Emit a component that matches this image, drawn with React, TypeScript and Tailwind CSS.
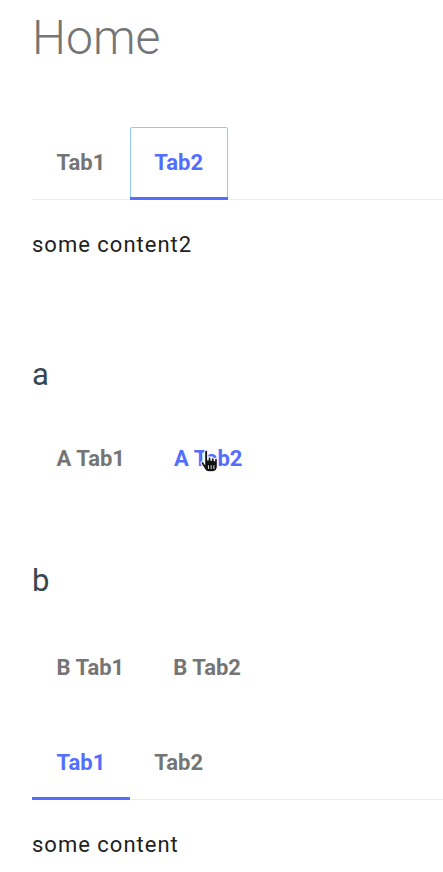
import React from 'react';

const font = { fontFamily: 'Roboto, "Noto Sans", sans-serif' };

interface TabDef {
  label: string;
  active?: boolean;
  focused?: boolean;
  cursor?: boolean;
}

function HandCursor() {
  return (
    <svg className="absolute left-[48px] top-[25px]" width="22" height="26" viewBox="0 0 20 24">
      <path
        d="M6 2.5c0-1 .7-1.5 1.4-1.5S8.8 1.5 8.8 2.5V10h.4V8.6c0-.9.6-1.3 1.3-1.3s1.3.4 1.3 1.3V10.4h.4V9.3c0-.9.6-1.3 1.3-1.3s1.3.4 1.3 1.3v1.4h.4v-.8c0-.9.6-1.3 1.2-1.3.7 0 1.3.4 1.3 1.3V16c0 2.8-1.6 5-4.4 5H9.6c-1.6 0-2.6-.8-3.4-2L3 14c-.6-.9-.4-1.8.3-2.2.7-.4 1.5-.1 2 .6L6 13.6z"
        fill="#111"
        stroke="#fff"
        strokeWidth="1"
      />
      <path d="M9.5 15v3.5M12 15v3.5M14.5 15v3.5" stroke="#fff" strokeWidth="0.8" />
    </svg>
  );
}

function TabBar({ tabs, underline }: { tabs: TabDef[]; underline?: boolean }) {
  return (
    <div className={`flex ${underline ? 'border-b border-[#eeeeee]' : ''}`}>
      {tabs.map((t) => (
        <div
          key={t.label}
          className={`relative flex h-[72px] items-center justify-center px-[23.5px] text-[22px] font-bold ${
            t.active ? 'text-[#536dfe]' : 'text-[#757575]'
          } ${t.focused ? 'rounded-[2px] border border-[#90caf9]' : 'border border-transparent'}`}
        >
          {t.label}
          {t.active && underline && (
            <div className="absolute bottom-[-2px] left-[-1px] right-[-1px] h-[3px] bg-[#536dfe]" />
          )}
          {t.cursor && <HandCursor />}
        </div>
      ))}
    </div>
  );
}

export default function App() {
  return (
    <div className="min-h-screen bg-white pl-8" style={font}>
      <h1 className="pt-[9px] text-[48px] font-light leading-[1.2] text-[#757575]">Home</h1>

      <div className="mt-[60px]">
        <TabBar underline tabs={[{ label: 'Tab1' }, { label: 'Tab2', active: true, focused: true }]} />
      </div>
      <p className="mt-[31px] text-[22px] leading-[28px] tracking-[1px] text-[#212121]">some content2</p>

      <h2 className="mt-[98px] text-[31px] leading-[36px] text-[#37474f]">a</h2>
      <div className="mt-[30px]">
        <TabBar tabs={[{ label: 'A Tab1' }, { label: 'A Tab2', active: true, cursor: true }]} />
      </div>

      <h2 className="mt-[68px] text-[31px] leading-[36px] text-[#37474f]">b</h2>
      <div className="mt-[33px]">
        <TabBar tabs={[{ label: 'B Tab1' }, { label: 'B Tab2' }]} />
      </div>

      <div className="mt-[23px]">
        <TabBar underline tabs={[{ label: 'Tab1', active: true }, { label: 'Tab2' }]} />
      </div>
      <p className="mt-[31px] text-[22px] leading-[28px] tracking-[1px] text-[#212121]">some content</p>
    </div>
  );
}
